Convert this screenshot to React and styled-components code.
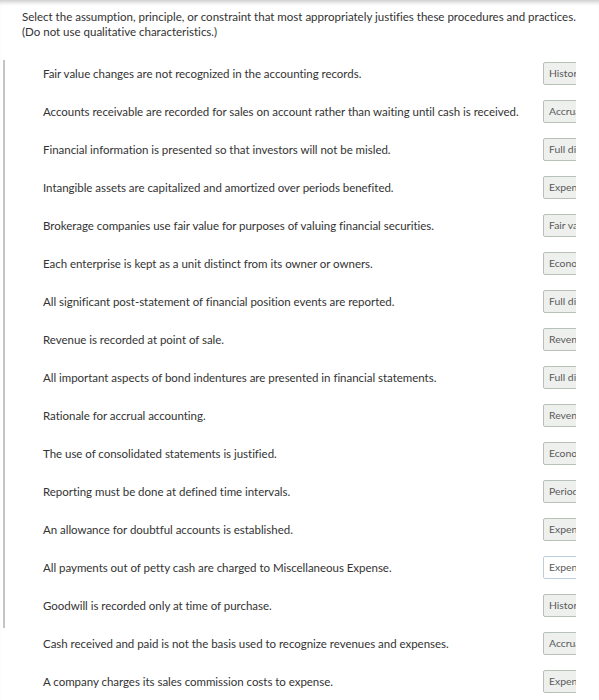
import React from "react";
import styled, { createGlobalStyle } from "styled-components";

const GlobalStyle = createGlobalStyle`
   body {
      margin: 0;
      background: #ffffff;
      font-family: Lato, "Open Sans", sans-serif;
   }
`

const Page = styled.div`
   width: 599px;
   height: 700px;
   overflow: hidden;
   background: #ffffff;
   box-shadow: inset 0 5px 4px -3px rgba(0, 0, 0, 0.22);
   color: #333;
`

const Prompt = styled.p`
   margin: 0;
   padding: 9px 0 0 22px;
   font-size: 11.55px;
   line-height: 15px;
   letter-spacing: -0.02px;
`

const List = styled.div`
   position: relative;
   width: 576px;
   margin-top: 15px;

   &::before {
      content: "";
      position: absolute;
      left: 3px;
      top: 6px;
      width: 2px;
      height: 568px;
      background: #c4c4c4;
   }
`

const Row = styled.div`
   box-sizing: border-box;
   width: 576px;
   display: flex;
   align-items: center;
   height: 38px;
   padding-left: 43px;
`

const Statement = styled.span`
   flex: 1;
   min-width: 0;
   font-size: 11.5px;
   letter-spacing: -0.03px;
   white-space: nowrap;
`

const Clip = styled.div`
   width: 33px;
   height: 23px;
   overflow: hidden;
   flex-shrink: 0;
`

const Select = styled.div`
   box-sizing: border-box;
   width: 150px;
   height: 23px;
   padding: 0 5px;
   display: flex;
   align-items: center;
   font-size: 10.4px;
   color: #5a5a5a;
   white-space: nowrap;
   border-radius: 2px;
   background: ${props => props.$focused ? "#ffffff" : "#eef0ee"};
   border: 1px solid ${props => props.$focused ? "#bccfe0" : "#b7c1b7"};
`

const rows = [
   ["Fair value changes are not recognized in the accounting records.", "Historical cost principle"],
   ["Accounts receivable are recorded for sales on account rather than waiting until cash is received.", "Accrual-basis assumption"],
   ["Financial information is presented so that investors will not be misled.", "Full disclosure principle"],
   ["Intangible assets are capitalized and amortized over periods benefited.", "Expense recognition principle"],
   ["Brokerage companies use fair value for purposes of valuing financial securities.", "Fair value principle"],
   ["Each enterprise is kept as a unit distinct from its owner or owners.", "Economic entity assumption"],
   ["All significant post-statement of financial position events are reported.", "Full disclosure principle"],
   ["Revenue is recorded at point of sale.", "Revenue recognition principle"],
   ["All important aspects of bond indentures are presented in financial statements.", "Full disclosure principle"],
   ["Rationale for accrual accounting.", "Revenue recognition principle"],
   ["The use of consolidated statements is justified.", "Economic entity assumption"],
   ["Reporting must be done at defined time intervals.", "Periodicity assumption"],
   ["An allowance for doubtful accounts is established.", "Expense recognition principle"],
   ["All payments out of petty cash are charged to Miscellaneous Expense.", "Expense recognition principle", true],
   ["Goodwill is recorded only at time of purchase.", "Historical cost principle"],
   ["Cash received and paid is not the basis used to recognize revenues and expenses.", "Accrual-basis assumption"],
   ["A company charges its sales commission costs to expense.", "Expense recognition principle"],
]

const App = () => {

   return (
      <Page>
         <GlobalStyle />
         <Prompt>
            Select the assumption, principle, or constraint that most appropriately justifies these procedures and practices.
            <br />
            (Do not use qualitative characteristics.)
         </Prompt>
         <List>
            {rows.map(([text, answer, focused], i) => (
               <Row key={i}>
                  <Statement>{text}</Statement>
                  <Clip>
                     <Select $focused={focused}>{answer}</Select>
                  </Clip>
               </Row>
            ))}
         </List>
      </Page>
   )

}

export default App;
